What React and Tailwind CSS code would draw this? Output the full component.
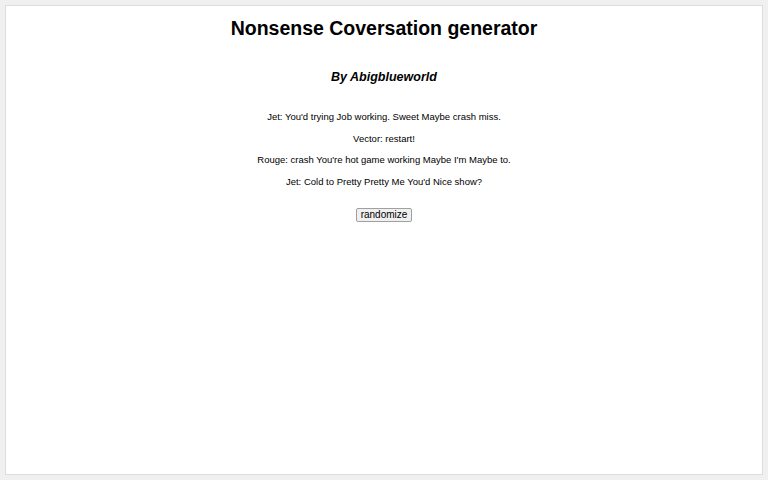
import React, { useState } from "react";

const names = ["Jet", "Vector", "Rouge"];

const start = [
  { who: "Jet", text: "You'd trying Job working. Sweet Maybe crash miss." },
  { who: "Vector", text: "restart!" },
  { who: "Rouge", text: "crash You're hot game working Maybe I'm Maybe to." },
  { who: "Jet", text: "Cold to Pretty Pretty Me You'd Nice show?" },
];

const words = ["You'd", "trying", "Job", "working", "Sweet", "Maybe", "crash", "miss", "restart", "hot", "game", "I'm", "to", "Cold", "Pretty", "Me", "Nice", "show", "You're"];
const ends = [".", "!", "?"];

function makeLine() {
  const n = 1 + Math.floor(Math.random() * 9);
  const out = [];
  for (let i = 0; i < n; i++) out.push(words[Math.floor(Math.random() * words.length)]);
  return {
    who: names[Math.floor(Math.random() * names.length)],
    text: out.join(" ") + ends[Math.floor(Math.random() * ends.length)],
  };
}

export default function App() {
  const [lines, setLines] = useState(start);

  return (
    <div className="min-h-screen bg-[#f0f0f0] p-[5px] font-['Liberation_Sans',Arial,sans-serif] text-black">
      <div className="h-[470px] bg-white border border-[#dcdcdc] text-center">
        <h1 className="pt-[8px] text-[19.5px] leading-[28px] font-bold">Nonsense Coversation generator</h1>
        <h2 className="mt-[27px] text-[12.5px] leading-[16px] font-bold italic">By Abigblueworld</h2>
        <div className="mt-[26px] flex flex-col gap-[9.5px] text-[9.5px] leading-[12px]">
          {lines.map((l, i) => (
            <p key={i}>
              {l.who}: {l.text}
            </p>
          ))}
        </div>
        <button
          onClick={() => setLines([makeLine(), makeLine(), makeLine(), makeLine()])}
          className="mt-[20px] px-[3.5px] py-0 text-[10px] leading-[12px] bg-[#f0f0f0] border border-[#a0a0a0] rounded-[2px]"
        >
          randomize
        </button>
      </div>
    </div>
  );
}
